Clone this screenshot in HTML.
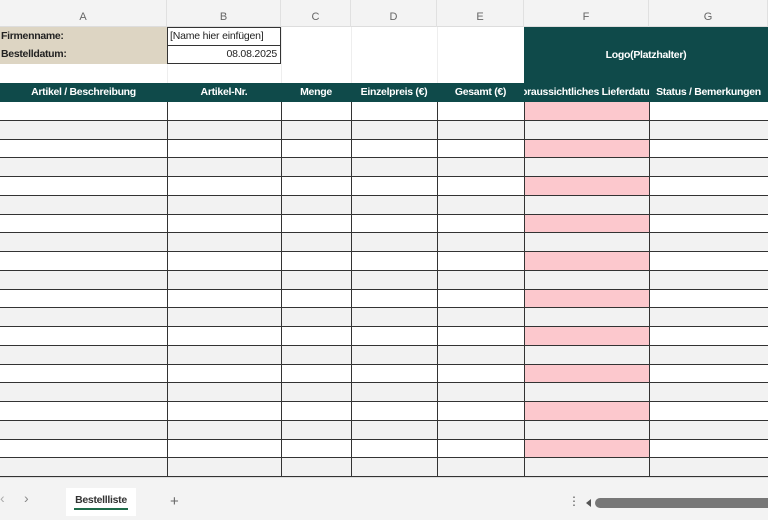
<!DOCTYPE html>
<html><head><meta charset="utf-8"><style>
*{margin:0;padding:0;box-sizing:border-box}
body{width:768px;height:520px;overflow:hidden;background:#fff;font-family:"Liberation Sans",sans-serif;position:relative}
.a{position:absolute}
.ch{top:0;height:27px;background:#f3f3f3;border-bottom:1px solid #ddd;color:#666;font-size:11px;text-align:center;line-height:34px}
.ch div{position:absolute;top:0;height:27px;border-right:1px solid #e0e0e0}
.lbl{background:#ddd5c3;font-weight:bold;font-size:10.5px;letter-spacing:-0.3px;color:#222;padding-left:1px;line-height:18px}
.hd{top:83px;height:19px;background:#0f4a4a;color:#fff;font-weight:bold;font-size:10.5px;letter-spacing:-0.3px;line-height:19px}
.hd div{position:absolute;top:0;height:19px;text-align:center;white-space:nowrap;overflow:hidden}
.row{position:absolute;left:0;width:768px;border-bottom:1px solid #333}
.v{position:absolute;top:102px;height:375px;width:1px;background:#333}
</style></head><body>
<div class="a ch" style="left:0;width:768px">
<div style="left:0;width:167px">A</div><div style="left:167px;width:114px">B</div><div style="left:281px;width:70px">C</div><div style="left:351px;width:86px">D</div><div style="left:437px;width:87px">E</div><div style="left:524px;width:125px">F</div><div style="left:649px;width:119px">G</div>
</div>
<div class="a" style="left:0;top:27px;width:524px;height:56px;background:#fff"></div>
<div class="a" style="left:167px;top:27px;width:1px;height:56px;background:#eee"></div>
<div class="a" style="left:281px;top:27px;width:1px;height:56px;background:#eee"></div>
<div class="a" style="left:351px;top:27px;width:1px;height:56px;background:#eee"></div>
<div class="a" style="left:437px;top:27px;width:1px;height:56px;background:#eee"></div>
<div class="a lbl" style="left:0;top:27px;width:167px;height:18px">Firmenname:</div>
<div class="a lbl" style="left:0;top:45px;width:167px;height:19px">Bestelldatum:</div>
<div class="a" style="left:167px;top:27px;width:114px;height:19px;border:1px solid #333;font-size:10.5px;letter-spacing:-0.2px;color:#222;line-height:17px;padding-left:2px">[Name hier einfügen]</div>
<div class="a" style="left:167px;top:45px;width:114px;height:19px;border:1px solid #333;font-size:10.5px;letter-spacing:-0.2px;color:#222;line-height:17px;text-align:right;padding-right:3px">08.08.2025</div>
<div class="a" style="left:524px;top:27px;width:244px;height:56px;background:#0f4a4a;color:#fff;font-weight:bold;font-size:10.5px;letter-spacing:-0.3px;text-align:center;line-height:56px">Logo(Platzhalter)</div>
<div class="a hd" style="left:0;width:768px">
<div style="left:0;width:167px">Artikel / Beschreibung</div><div style="left:167px;width:114px">Artikel-Nr.</div><div style="left:281px;width:70px">Menge</div><div style="left:351px;width:86px">Einzelpreis (€)</div><div style="left:437px;width:87px">Gesamt (€)</div><div style="left:524px;width:125px;text-align:left;text-indent:-3px">oraussichtliches Lieferdatu</div><div style="left:649px;width:119px">Status / Bemerkungen</div>
</div>
<div id="rows"></div>
<script>
var h='',H=375/20;
for(var i=0;i<20;i++){var t=102+i*H;
h+='<div class="row" style="top:'+t+'px;height:'+H+'px;background:'+(i%2?'#f2f2f2':'#fff')+'"></div>';
if(i%2==0)h+='<div class="a" style="left:524px;top:'+t+'px;width:125px;height:'+(H-1)+'px;background:#fcc8cd"></div>';}
[167,281,351,437,524,649].forEach(function(x){h+='<div class="v" style="left:'+x+'px"></div>'});
document.getElementById('rows').innerHTML=h;
</script>
<div class="a" style="left:0;top:477px;width:768px;height:43px;background:#f3f3f3;border-top:1px solid #ddd"></div>
<div class="a" style="left:0;top:490px;font-size:14px;color:#aaa">‹</div>
<div class="a" style="left:24px;top:490px;font-size:14px;color:#888">›</div>
<div class="a" style="left:66px;top:488px;width:70px;height:28px;background:#fff;font-size:10.5px;letter-spacing:-0.3px;font-weight:bold;color:#333;text-align:center;line-height:24px">Bestellliste</div>
<div class="a" style="left:74px;top:508px;width:54px;height:2px;background:#1f6b4a"></div>
<div class="a" style="left:170px;top:493px;font-size:15px;color:#666">+</div>
<div class="a" style="left:568px;top:494px;font-size:12px;color:#555">⋮</div>
<div class="a" style="left:586px;top:499px;width:0;height:0;border-top:4px solid transparent;border-bottom:4px solid transparent;border-right:5px solid #555"></div>
<div class="a" style="left:595px;top:498px;width:180px;height:10px;border-radius:5px;background:#777"></div>
</body></html>
